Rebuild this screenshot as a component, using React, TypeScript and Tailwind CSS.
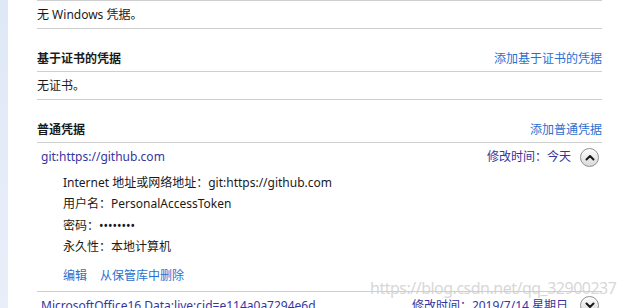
import React from 'react';

const font = { fontFamily: '"Noto Sans", "Noto Sans CJK SC", sans-serif' };

function Chevron({ up }: { up: boolean }) {
  return (
    <span className="flex h-[19px] w-[19px] items-center justify-center rounded-full border border-[#8e8e8e] bg-gradient-to-b from-[#fdfdfd] to-[#d9d9d9] shadow-[inset_0_1px_0_#fff]">
      <svg width="10" height="7" viewBox="0 0 10 7">
        <path
          d={up ? 'M1.5 5.5 L5 2 L8.5 5.5' : 'M1.5 1.5 L5 5 L8.5 1.5'}
          fill="none"
          stroke="#1a1a1a"
          strokeWidth="2"
          strokeLinecap="round"
          strokeLinejoin="round"
        />
      </svg>
    </span>
  );
}

function SectionHeader({ title, action }: { title: string; action: string }) {
  return (
    <div className="flex h-[43px] items-end justify-between border-b border-[#cfcfcf] pb-[6px]">
      <span className="font-bold text-[#1a1a1a]">{title}</span>
      <span className="text-[#2a6fd0]">{action}</span>
    </div>
  );
}

export default function App() {
  const details = [
    ['Internet 地址或网络地址：', 'git:https://github.com'],
    ['用户名：', 'PersonalAccessToken'],
    ['密码：', '••••••••'],
    ['永久性：', '本地计算机'],
  ];

  return (
    <div className="relative flex h-[308px] w-[622px] overflow-hidden bg-white text-[12px] leading-none text-[#1a1a1a]" style={font}>
      <div className="w-[8px] shrink-0 bg-gradient-to-b from-[#dfe8f6] to-[#e9eff9]" />
      <div className="ml-[29px] w-[565px] shrink-0">
        <div className="flex h-[29px] items-center border-y border-[#cfcfcf]">无 Windows 凭据。</div>

        <SectionHeader title="基于证书的凭据" action="添加基于证书的凭据" />
        <div className="flex h-[28px] items-center border-b border-[#cfcfcf]">无证书。</div>

        <SectionHeader title="普通凭据" action="添加普通凭据" />

        <div className="border-b border-[#cfcfcf]">
          <div className="flex h-[28px] items-center justify-between pl-[4px] pr-[3px] text-[#3535a0]">
            <span>git:https://github.com</span>
            <div className="flex items-center gap-[9px]">
              <span>修改时间：今天</span>
              <Chevron up />
            </div>
          </div>
          <div className="pl-[26px] pt-[1px]">
            {details.map(([k, v]) => (
              <div key={k} className="flex h-[21.5px] items-center">
                <span>{k}</span>
                <span>{v}</span>
              </div>
            ))}
            <div className="flex h-[33px] items-center gap-[13px] pt-[4px] pb-[2px] text-[#2a6fd0]">
              <span>编辑</span>
              <span>从保管库中删除</span>
            </div>
          </div>
        </div>

        <div className="flex h-[27px] items-center justify-between pl-[4px] pr-[3px] text-[#3535a0]">
          <span>MicrosoftOffice16 Data:live:cid=e114a0a7294e6d...</span>
          <div className="flex items-center gap-[12px]">
            <span>修改时间：2019/7/14 星期日</span>
            <Chevron up={false} />
          </div>
        </div>
      </div>

      <span className="pointer-events-none absolute left-[370px] top-[280px] text-[16px] leading-none tracking-[-0.5px] text-[#cdcdcd]/80">
        https://blog.csdn.net/qq_32900237
      </span>
    </div>
  );
}
